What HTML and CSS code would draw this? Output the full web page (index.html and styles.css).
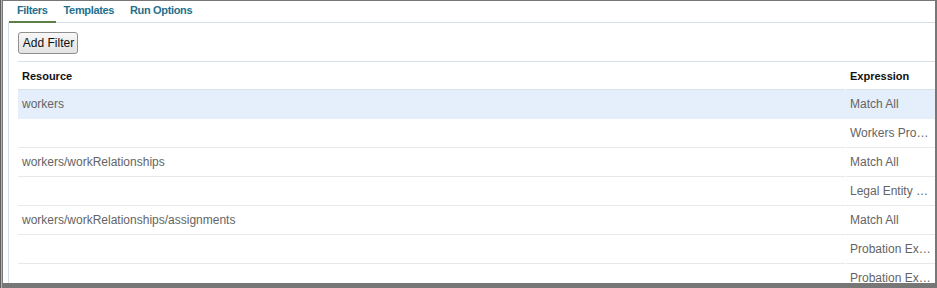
FILE: index.html
```html
<!DOCTYPE html>
<html lang="en">
<head>
<meta charset="utf-8">
<title>Filters</title>
<link rel="stylesheet" href="styles.css">
</head>
<body>
<div class="window">
  <div class="screen">
    <div class="tabs">
      <div class="tab active">Filters</div>
      <div class="tab">Templates</div>
      <div class="tab">Run Options</div>
    </div>
    <div class="panel">
      <div class="toolbar">
        <button class="btn" type="button">Add Filter</button>
      </div>
      <div class="table">
        <div class="row head">
          <div class="cell">Resource</div>
          <div class="cell">Expression</div>
        </div>
        <div class="row selected">
          <div class="cell">workers</div>
          <div class="cell">Match All</div>
        </div>
        <div class="row">
          <div class="cell"></div>
          <div class="cell">Workers Probation Details</div>
        </div>
        <div class="row">
          <div class="cell">workers/workRelationships</div>
          <div class="cell">Match All</div>
        </div>
        <div class="row">
          <div class="cell"></div>
          <div class="cell">Legal Entity Details</div>
        </div>
        <div class="row">
          <div class="cell">workers/workRelationships/assignments</div>
          <div class="cell">Match All</div>
        </div>
        <div class="row">
          <div class="cell"></div>
          <div class="cell">Probation Expiry Date</div>
        </div>
        <div class="row">
          <div class="cell"></div>
          <div class="cell">Probation Expiry Status</div>
        </div>
      </div>
    </div>
  </div>
</div>
</body>
</html>
```
FILE: styles.css
```css
* { box-sizing: border-box; }

html, body {
  margin: 0;
  padding: 0;
  background: #ffffff;
}

body {
  font-family: "Liberation Sans", Arial, Helvetica, sans-serif;
  font-size: 12px;
  color: #333;
}

.window {
  width: 937px;
  height: 288px;
  background: #777777;
  padding: 1px 2px 5px 3px;
  box-shadow: inset 1px 0 0 #5f5f5f, inset 2px 0 0 #b4b4b4;
}

.screen {
  width: 100%;
  height: 100%;
  background: #ffffff;
  overflow: hidden;
  padding-left: 5px;
}

.tabs {
  display: flex;
  height: 22px;
  border-bottom: 1px solid #d5dee6;
  padding-left: 1px;
}

.tab {
  font-size: 11px;
  font-weight: bold;
  letter-spacing: -0.35px;
  line-height: 14px;
  padding: 2px 8px 4px;
  height: 22px;
  color: #23708e;
  border-bottom: 2px solid transparent;
  white-space: nowrap;
}

.tab.active {
  border-bottom-color: #5c7f47;
}

.panel {
  border-left: 1px solid #d3dde6;
  padding-left: 9px;
  height: 100%;
}

.toolbar {
  padding-top: 9px;
  padding-bottom: 7px;
  border-bottom: 1px solid #d6e0e8;
}

.btn {
  display: block;
  width: 60px;
  height: 22px;
  padding: 0 0 0 1px;
  margin: 0;
  font-family: "Liberation Sans", Arial, Helvetica, sans-serif;
  font-size: 12px;
  color: #111;
  background: linear-gradient(#f7f7f7, #e3e3e3);
  border: 1px solid #8f8f8f;
  border-radius: 3px;
  text-align: center;
}

.table {
  width: 920px;
}

.row {
  display: grid;
  grid-template-columns: 827px 92px;
  column-gap: 1px;
  height: 29px;
}

.cell {
  height: 29px;
  padding: 0 4px;
  line-height: 29px;
  border-bottom: 1px solid #e8e8e8;
  color: #646464;
  white-space: nowrap;
  overflow: hidden;
  text-overflow: ellipsis;
}

.row.head {
  height: 28px;
}

.row.head .cell {
  height: 28px;
  line-height: 28px;
  font-size: 11px;
  font-weight: bold;
  color: #111;
  border-bottom-color: #dae2e9;
}

.row.selected {
  background: #e4effb;
}

.row.selected .cell {
  border-bottom-color: #e4effb;
}
```
